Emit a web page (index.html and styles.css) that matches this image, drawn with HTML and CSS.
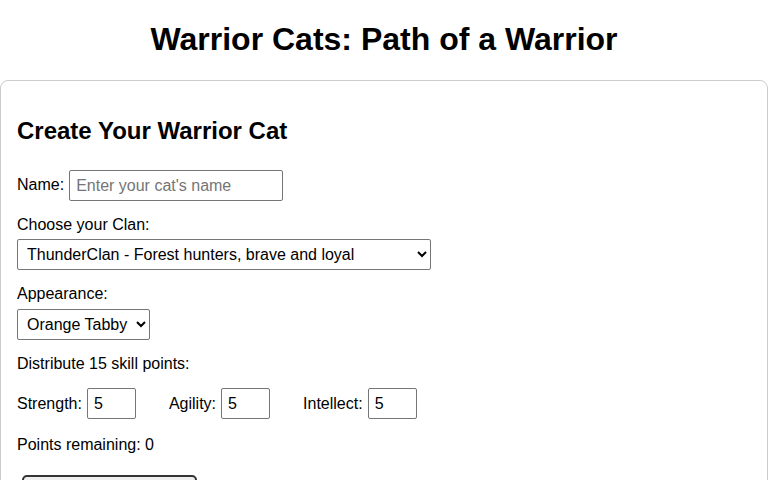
FILE: index.html
```html
<!DOCTYPE html>
<html lang="en">
<head>
<meta charset="utf-8">
<title>Warrior Cats: Path of a Warrior</title>
<link rel="stylesheet" href="styles.css">
</head>
<body>
<h1 class="title">Warrior Cats: Path of a Warrior</h1>
<div class="card">
  <h2 class="card-title">Create Your Warrior Cat</h2>
  <div class="group row">
    <label class="inline-label" for="name">Name:</label>
    <input class="control name-input" id="name" type="text" placeholder="Enter your cat's name">
  </div>
  <div class="group">
    <label class="block-label" for="clan">Choose your Clan:</label>
    <select class="control select clan-select" id="clan">
      <option>ThunderClan - Forest hunters, brave and loyal</option>
      <option>RiverClan - Swimmers and fishers</option>
      <option>WindClan - Fast moorland runners</option>
      <option>ShadowClan - Cunning marsh dwellers</option>
    </select>
  </div>
  <div class="group">
    <label class="block-label" for="look">Appearance:</label>
    <select class="control select look-select" id="look">
      <option>Orange Tabby</option>
      <option>Gray Tabby</option>
      <option>Black</option>
      <option>White</option>
    </select>
  </div>
  <p class="group text">Distribute 15 skill points:</p>
  <div class="group row stats">
    <div class="stat">
      <label class="inline-label" for="str">Strength:</label>
      <input class="control stat-input" id="str" type="text" value="5">
    </div>
    <div class="stat">
      <label class="inline-label" for="agi">Agility:</label>
      <input class="control stat-input" id="agi" type="text" value="5">
    </div>
    <div class="stat">
      <label class="inline-label" for="int">Intellect:</label>
      <input class="control stat-input" id="int" type="text" value="5">
    </div>
  </div>
  <p class="group text">Points remaining: 0</p>
  <button class="start-btn" type="button">Begin Your Journey</button>
</div>
</body>
</html>
```

FILE: styles.css
```css
html, body {
  margin: 0;
  padding: 0;
  background: #fff;
  color: #000;
  font-family: "Liberation Sans", Arial, sans-serif;
  font-size: 16px;
}

.title {
  font-size: 32px;
  font-weight: bold;
  text-align: center;
  margin: 21px 0 22px;
  line-height: 37px;
}

.card {
  border: 1px solid #ccc;
  border-radius: 8px;
  padding: 16px;
  background: #fff;
}

.card-title {
  font-size: 24px;
  font-weight: bold;
  margin: 20px 0;
  line-height: 28px;
}

.group {
  margin: 0;
  padding: 0 0 10px;
}

.row {
  display: flex;
  align-items: center;
  gap: 5px;
}

.stats {
  gap: 33px;
  padding-bottom: 12px;
}

.stat {
  display: flex;
  align-items: center;
  gap: 5px;
}

.text {
  line-height: 18.4px;
}

.block-label {
  display: block;
  line-height: 18.4px;
}

.inline-label {
  line-height: 18.4px;
}

.control {
  box-sizing: border-box;
  height: 31px;
  margin: 5px 0;
  font-family: "Liberation Sans", Arial, sans-serif;
  font-size: 16px;
  color: #000;
  border: 1px solid #767676;
  border-radius: 2px;
  background: #fff;
}

.name-input {
  width: 214px;
  padding: 5px 6px;
}

.name-input::placeholder {
  color: #757575;
}

.stat-input {
  width: 49px;
  padding: 5px 6px;
}

.select {
  display: block;
  padding: 5px 5px;
}

.clan-select {
  width: 414px;
}

.look-select {
  width: 133px;
}

.start-btn {
  display: block;
  margin: 10px 5px 0;
  width: 175px;
  height: 52px;
  font-family: "Liberation Sans", Arial, sans-serif;
  font-size: 16px;
  background: #efefef;
  border: 2px solid #333;
  border-radius: 5px;
  color: #000;
}
```
